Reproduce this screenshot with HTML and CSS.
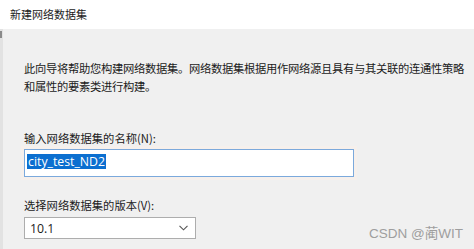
FILE: index.html
```html
<!DOCTYPE html>
<html lang="zh-CN">
    <head>
        <meta charset="UTF-8" />
        <meta name="viewport" content="width=device-width, initial-scale=1.0" />
        <title>新建网络数据集</title>
        <link rel="stylesheet" href="styles.css">
    </head>
    <body>
        <div class="titlebar">新建网络数据集</div>

        <div class="page">
            <div class="edge"></div>
            <div class="content">
                <p class="intro">
                    此向导将帮助您构建网络数据集。网络数据集根据用作网络源且具有与其关联的连通性策略<br>和属性的要素类进行构建。
                </p>

                <label class="field-label" for="name">输入网络数据集的名称(N):</label>
                <div class="name-box">
                    <span class="selected">city_test_ND2</span>
                </div>

                <label class="field-label second" for="version">选择网络数据集的版本(V):</label>
                <div class="select-box">
                    <span class="value">10.1</span>
                    <svg class="chevron" width="9" height="6" viewBox="0 0 9 6">
                        <polyline points="0.5,0.8 4.5,4.8 8.5,0.8" fill="none" stroke="#555" stroke-width="1.1" />
                    </svg>
                </div>

                <div class="footer">
                    <span class="watermark">CSDN @蔺WIT</span>
                </div>
            </div>
        </div>
    </body>
</html>
```

FILE: styles.css
```css
body {
    margin: 0;
    width: 474px;
    height: 249px;
    overflow: hidden;
    background: #f0f0f0;
    font-family: "Noto Sans CJK SC", "Noto Sans", sans-serif;
    font-size: 11.3px;
    color: #1b1b1b;
}
.titlebar {
    height: 29px;
    line-height: 29px;
    padding-left: 10px;
    background: #ffffff;
    font-size: 11px;
}
.page {
    display: flex;
    height: 220px;
}
.edge {
    width: 3px;
    background: #e2e2e2;
    position: relative;
}
.edge::before {
    content: "";
    position: absolute;
    left: 0;
    top: 2px;
    width: 2px;
    height: 7px;
    background: #8a8a8a;
}
.content {
    flex: 1;
    padding-left: 21px;
}
.intro {
    margin: 0;
    padding-top: 30px;
    line-height: 18px;
    white-space: nowrap;
    letter-spacing: -0.3px;
}
.field-label {
    display: block;
    margin-top: 34px;
    line-height: 18px;
}
.field-label.second {
    margin-top: 19px;
}
.name-box {
    box-sizing: border-box;
    width: 330px;
    height: 28px;
    margin-top: 2px;
    padding: 3px 0 0 2px;
    background: #ffffff;
    border: 1px solid #7ba9dc;
    box-shadow: 0 0 0 3px #f6f0ec;
}
.selected {
    display: inline-block;
    height: 15px;
    line-height: 15px;
    padding: 0 1px;
    background: #0b6fd0;
    color: #ffffff;
    font-family: "Open Sans", "Noto Sans", sans-serif;
    font-size: 12.3px;
}
.select-box {
    box-sizing: border-box;
    width: 172px;
    height: 22px;
    margin-top: 3px;
    padding: 0 7px 0 5px;
    display: flex;
    align-items: center;
    justify-content: space-between;
    background: #ffffff;
    border: 1px solid #adadad;
    font-family: "Open Sans", "Noto Sans", sans-serif;
    font-size: 12.3px;
}
.footer {
    display: flex;
    justify-content: flex-end;
    padding-right: 11px;
    margin-top: -13px;
}
.watermark {
    color: #9e9e9e;
    font-family: "Liberation Sans", "Noto Sans CJK SC", sans-serif;
    font-size: 13.5px;
    line-height: 15px;
}
```
